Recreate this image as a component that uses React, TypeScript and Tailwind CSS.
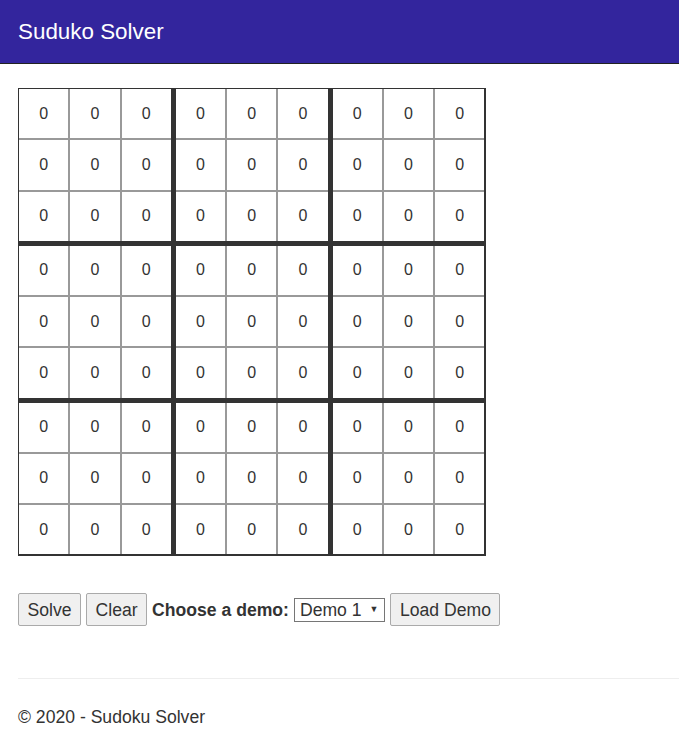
import React from "react";

const board: number[][] = Array.from({ length: 9 }, () => Array(9).fill(0));

function Cell({ value }: { value: number }) {
  return (
    <div className="flex h-[49.25px] w-[49.25px] items-center justify-center bg-white text-[16px] text-[#333]">
      {value}
    </div>
  );
}

function Block({ br, bc }: { br: number; bc: number }) {
  const cells: number[] = [];
  for (let r = 0; r < 3; r++) {
    for (let c = 0; c < 3; c++) {
      cells.push(board[br * 3 + r][bc * 3 + c]);
    }
  }
  return (
    <div className="grid grid-cols-3 gap-[2px] bg-[#999]">
      {cells.map((v, i) => (
        <Cell key={i} value={v} />
      ))}
    </div>
  );
}

function Board() {
  return (
    <div className="inline-grid grid-cols-3 gap-[5px] border border-[#333] bg-[#333] border-r-2 border-b-2">
      {[0, 1, 2].map((br) =>
        [0, 1, 2].map((bc) => <Block key={`${br}-${bc}`} br={br} bc={bc} />)
      )}
    </div>
  );
}

function Button({ children }: { children: React.ReactNode }) {
  return (
    <button className="h-[33px] rounded-[2px] border border-[#aaa] bg-[#f0f0f0] px-[8.5px] text-[17.6px] text-[#333]">
      {children}
    </button>
  );
}

export default function App() {
  return (
    <div
      className="min-h-screen bg-white text-[#333]"
      style={{ fontFamily: '"Liberation Sans", Arial, sans-serif' }}
    >
      <header className="flex h-[64px] items-center border-b border-[#222] bg-[#33259d] px-[18px]">
        <h1 className="text-[22.4px] text-white">Suduko Solver</h1>
      </header>

      <main className="px-[18px] pt-[24px]">
        <Board />

        <div className="mt-[37px] flex items-center gap-[5px]">
          <Button>Solve</Button>
          <Button>Clear</Button>
          <label className="text-[17.6px] font-bold text-[#333]">Choose a demo:</label>
          <div className="flex h-[24px] items-center gap-[8px] border border-[#767676] bg-white pl-[5px] pr-[6px] text-[17.6px] text-[#333]">
            <span>Demo 1</span>
            <span className="text-[9px]">▼</span>
          </div>
          <Button>Load Demo</Button>
        </div>
      </main>

      <footer className="mt-[52px] ml-[18px]">
        <div className="border-t border-[#eee]" />
        <p className="pt-[25px] text-[17.6px] text-[#333]">© 2020 - Sudoku Solver</p>
      </footer>
    </div>
  );
}
